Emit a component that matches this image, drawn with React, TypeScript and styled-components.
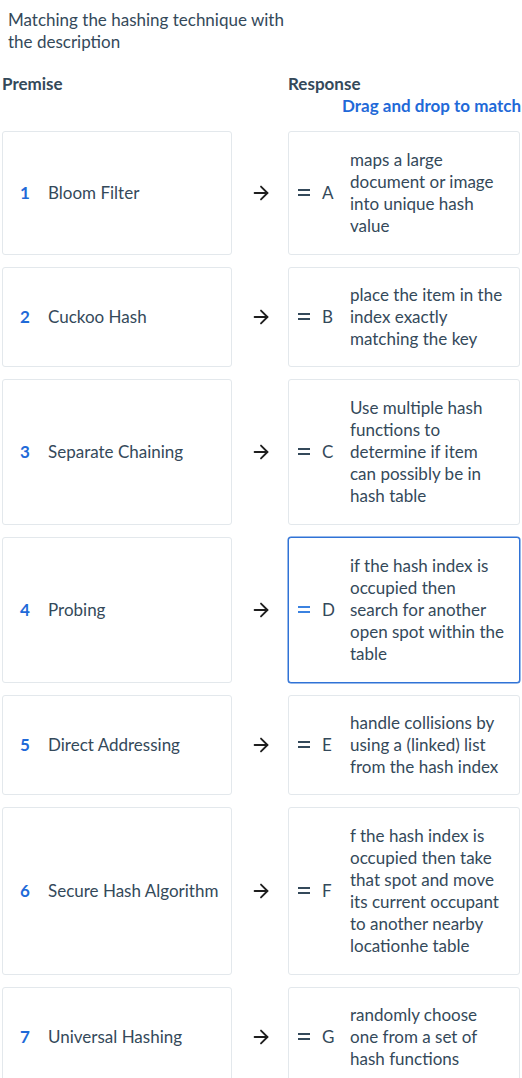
import { FC } from 'react';
import styled, { createGlobalStyle } from 'styled-components';
import { ArrowRight } from 'lucide-react';

type Pair = {
  num: number;
  premise: string;
  letter: string;
  lines: string[];
  active?: boolean;
};

// response text kept in the lines it is shown in
const pairs: Pair[] = [
  { num: 1, premise: 'Bloom Filter', letter: 'A', lines: ['maps a large', 'document or image', 'into unique hash', 'value'] },
  { num: 2, premise: 'Cuckoo Hash', letter: 'B', lines: ['place the item in the', 'index exactly', 'matching the key'] },
  { num: 3, premise: 'Separate Chaining', letter: 'C', lines: ['Use multiple hash', 'functions to', 'determine if item', 'can possibly be in', 'hash table'] },
  { num: 4, premise: 'Probing', letter: 'D', lines: ['if the hash index is', 'occupied then', 'search for another', 'open spot within the', 'table'], active: true },
  { num: 5, premise: 'Direct Addressing', letter: 'E', lines: ['handle collisions by', 'using a (linked) list', 'from the hash index'] },
  { num: 6, premise: 'Secure Hash Algorithm', letter: 'F', lines: ['f the hash index is', 'occupied then take', 'that spot and move', 'its current occupant', 'to another nearby', 'locationhe table'] },
  { num: 7, premise: 'Universal Hashing', letter: 'G', lines: ['randomly choose', 'one from a set of', 'hash functions'] },
];

const GlobalStyle = createGlobalStyle`
  body {
    margin: 0;
    background: #ffffff;
    font-family: Lato, "Open Sans", "Liberation Sans", sans-serif;
    color: #34495a;
  }
`;

const Handle: FC<{ active?: boolean }> = ({ active }) => (
  <SHandle width="12" height="8" viewBox="0 0 12 8">
    <rect x="0" y="0" width="12" height="2" fill={active ? '#3b82e0' : '#34495a'} />
    <rect x="0" y="5" width="12" height="2" fill={active ? '#3b82e0' : '#34495a'} />
  </SHandle>
);

export default function App() {
  return (
    <SPage>
      <GlobalStyle />
      <STitle>Matching the hashing technique with the description</STitle>
      <SHeader>
        <SColLabel>Premise</SColLabel>
        <span />
        <SResponseHead>
          <SColLabel>Response</SColLabel>
          <SHint>Drag and drop to match</SHint>
        </SResponseHead>
      </SHeader>
      <SList>
        {pairs.map((p) => (
          <SRow key={p.num}>
            <SPremiseCard>
              <SNum>{p.num}</SNum>
              <SText>{p.premise}</SText>
            </SPremiseCard>
            <SArrow>
              <ArrowRight size={22} strokeWidth={2} />
            </SArrow>
            <SResponseCard $active={p.active} $short={p.lines.length < 4}>
              <Handle active={p.active} />
              <SLetter>{p.letter}</SLetter>
              <SText>
                {p.lines.map((l, i) => (
                  <SLine key={i}>{l}</SLine>
                ))}
              </SText>
            </SResponseCard>
          </SRow>
        ))}
      </SList>
    </SPage>
  );
}

const SPage = styled.div`
  width: 518px;
  padding: 9px 2px 0;
`;

const STitle = styled.p`
  margin: 0 0 0 6px;
  width: 290px;
  font-size: 17px;
  line-height: 22px;
`;

const SHeader = styled.div`
  display: grid;
  grid-template-columns: 230px 56px 232px;
  margin-top: 20px;
`;

const SResponseHead = styled.div`
  display: flex;
  flex-direction: column;
`;

const SColLabel = styled.span`
  font-size: 17px;
  font-weight: 700;
  line-height: 22px;
`;

const SHint = styled.span`
  align-self: flex-end;
  margin-right: -1px;
  font-size: 17px;
  font-weight: 700;
  line-height: 22px;
  color: #1f6ad8;
`;

const SList = styled.div`
  display: flex;
  flex-direction: column;
  gap: 12px;
  margin-top: 14px;
`;

const SRow = styled.div`
  display: grid;
  grid-template-columns: 230px 56px 232px;
  align-items: stretch;
`;

const SCard = styled.div`
  display: flex;
  align-items: center;
  box-sizing: border-box;
  border: 1px solid #e3e8ec;
  border-radius: 3px;
  background: #fff;
  font-size: 17px;
  line-height: 22px;
`;

const SPremiseCard = styled(SCard)`
  padding: 0 10px 0 17px;
`;

const SResponseCard = styled(SCard)<{ $active?: boolean; $short?: boolean }>`
  padding: ${(p) => (p.$short ? '16px' : '17px')} 6px ${(p) => (p.$short ? '16px' : '17px')} 9px;
  border-color: ${(p) => (p.$active ? '#2f72d6' : '#e3e8ec')};
  box-shadow: ${(p) => (p.$active ? '0 0 0 0.5px #2f72d6' : 'none')};
`;

const SNum = styled.span`
  flex: 0 0 28px;
  font-weight: 700;
  color: #1f6ad8;
`;

const SText = styled.span`
  flex: 1;
  min-width: 0;
`;

const SLine = styled.span`
  display: block;
  white-space: nowrap;
`;

const SArrow = styled.div`
  display: flex;
  align-items: center;
  justify-content: center;
  padding-left: 2px;
  color: #1e1e1e;
`;

const SHandle = styled.svg`
  flex: 0 0 12px;
  margin-right: 12px;
`;

const SLetter = styled.span`
  flex: 0 0 28px;
`;
